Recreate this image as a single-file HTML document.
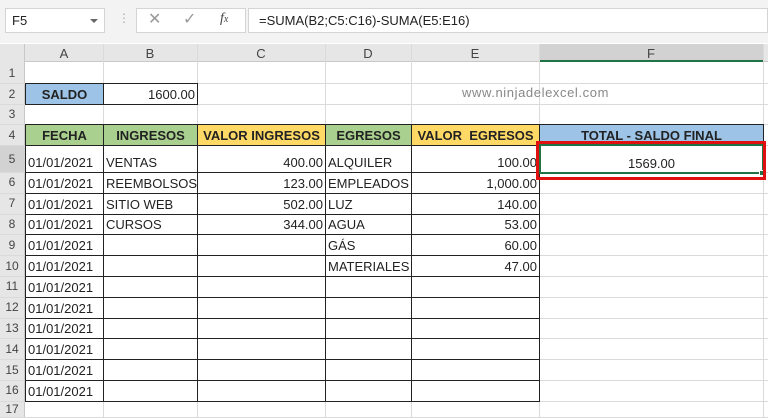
<!DOCTYPE html>
<html><head><style>
body{margin:0;width:768px;height:417px;overflow:hidden;background:#fff;font-family:"Liberation Sans",sans-serif;position:relative}
.a{position:absolute;box-sizing:border-box}
.t{font-size:13px;color:#222;white-space:nowrap;line-height:1}
</style></head><body>
<div class="a" style="left:0;top:0;width:768px;height:43px;background:#f3f3f3"></div>
<div class="a" style="left:5px;top:8px;width:100px;height:25px;background:#fff;border:1px solid #d4d4d4"></div>
<div class="a t" style="left:12px;top:14px;font-size:13px">F5</div>
<div class="a" style="left:90px;top:19px;width:0;height:0;border-left:4px solid transparent;border-right:4px solid transparent;border-top:4px solid #666"></div>
<div class="a t" style="left:118px;top:12px;color:#aaa;font-size:12px">⋮</div>
<div class="a" style="left:136px;top:8px;width:110px;height:25px;background:#fff;border:1px solid #d4d4d4"></div>
<div class="a t" style="left:148px;top:12px;color:#999;font-size:16px">✕</div>
<div class="a t" style="left:183px;top:12px;color:#999;font-size:16px">✓</div>
<div class="a t" style="left:220px;top:12px;color:#444;font-size:14px;font-style:italic;font-family:'Liberation Serif',serif">f<span style="font-size:10px">x</span></div>
<div class="a" style="left:248px;top:8px;width:520px;height:25px;background:#fff;border:1px solid #d4d4d4"></div>
<div class="a t" style="left:259px;top:14px">=SUMA(B2;C5:C16)-SUMA(E5:E16)</div>
<div id="g"></div>
<script>
const cols=[0,25,103,197,325,411,539,763];
const rows=[44,62,83,104,124,145,172];
for(let i=0;i<11;i++)rows.push(172+(i+1)*20.8);
rows.push(417);
let h='';
h+=`<div class="a" style="left:0;top:44px;width:768px;height:18px;background:#e6e6e6;border-bottom:1px solid #c8c8c8"></div>`;
h+=`<div class="a" style="left:0;top:44px;width:25px;height:373px;background:#e6e6e6;border-right:1px solid #c8c8c8"></div>`;
h+=`<div class="a" style="left:539px;top:44px;width:224px;height:18px;background:#d2d2d2;border-bottom:2px solid #217346"></div>`;
h+=`<div class="a" style="left:0;top:145px;width:25px;height:27px;background:#d2d2d2"></div>`;
const L='ABCDEF';
for(let c=1;c<7;c++){h+=`<div class="a t" style="left:${cols[c]}px;top:47px;width:${cols[c+1]-cols[c]}px;text-align:center;color:#444">${L[c-1]}</div>`;
h+=`<div class="a" style="left:${cols[c+1]}px;top:44px;width:1px;height:373px;background:#dadada"></div>`;}
for(let r=1;r<18;r++){const y=rows[r],y2=rows[r+1];
h+=`<div class="a" style="left:0;top:${y2}px;width:768px;height:1px;background:#dadada"></div>`;
h+=`<div class="a t" style="left:0;top:${(y+y2)/2-6}px;width:24px;text-align:center;color:#444;font-size:12px">${r}</div>`;}
function cell(c1,c2,r1,r2,bg,txt,al,bold,brd,col){
h+=`<div class="a t" style="left:${cols[c1]}px;top:${rows[r1]}px;width:${cols[c2]-cols[c1]+1}px;height:${rows[r2]-rows[r1]+1}px;${bg?'background:'+bg+';':''}${brd?'border:1px solid #222;':''}display:flex;align-items:flex-end;justify-content:${al};padding:0 2px 3px;${bold?'font-weight:bold;':''}${col?'color:'+col+';':''}">${txt}</div>`;}
cell(1,2,2,3,'#9dc3e6','SALDO','center',1,1);
cell(2,3,2,3,'','1600.00','flex-end',0,1);
h+=`<div class="a t" style="left:462px;top:86px;color:#888;font-size:13px;letter-spacing:.6px">www.ninjadelexcel.com</div>`;
const hd=[['FECHA','#a9d08e'],['INGRESOS','#a9d08e'],['VALOR INGRESOS','#ffd966'],['EGRESOS','#a9d08e'],['VALOR &nbsp;EGRESOS','#ffd966'],['TOTAL - SALDO FINAL','#9dc3e6']];
hd.forEach((x,i)=>cell(i+1,i+2,4,5,x[1],x[0],'center',1,1));
const B=['VENTAS','REEMBOLSOS','SITIO WEB','CURSOS'],C=['400.00','123.00','502.00','344.00'],D=['ALQUILER','EMPLEADOS','LUZ','AGUA','GÁS','MATERIALES'],E=['100.00','1,000.00','140.00','53.00','60.00','47.00'];
for(let r=5;r<17;r++){const i=r-5;
cell(1,2,r,r+1,'','01/01/2021','flex-start',0,1);
cell(2,3,r,r+1,'',B[i]||'','flex-start',0,1);
cell(3,4,r,r+1,'',C[i]||'','flex-end',0,1);
cell(4,5,r,r+1,'',D[i]||'','flex-start',0,1);
cell(5,6,r,r+1,'',E[i]||'','flex-end',0,1);}
cell(6,7,5,6,'','1569.00','center',0,0);
h+=`<div class="a" style="left:539px;top:144px;width:225px;height:30px;border:2px solid #217346"></div>`;
h+=`<div class="a" style="left:759px;top:170px;width:6px;height:6px;background:#217346;border:1px solid #fff"></div>`;
h+=`<div class="a" style="left:536px;top:141px;width:230px;height:39px;border:3px solid #e01010"></div>`;
document.getElementById('g').innerHTML=h;
</script>
</body></html>
